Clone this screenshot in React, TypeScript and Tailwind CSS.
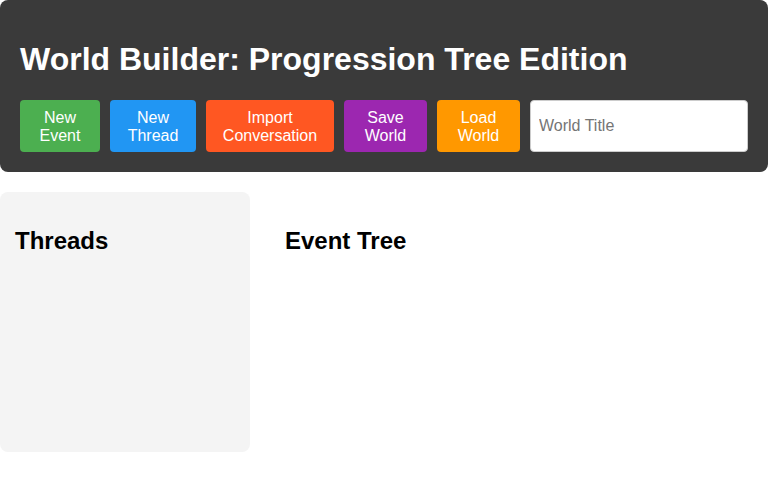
import React from 'react';

const buttons = [
  { label: 'New Event', cls: 'bg-[#4CAF50] w-[80px]' },
  { label: 'New Thread', cls: 'bg-[#2196F3] w-[86px]' },
  { label: 'Import Conversation', cls: 'bg-[#FF5722] w-[128px]' },
  { label: 'Save World', cls: 'bg-[#9C27B0] w-[83px]' },
  { label: 'Load World', cls: 'bg-[#FF9800] w-[83px]' },
];

export default function App() {
  return (
    <div className="min-h-[480px] bg-white font-['Liberation_Sans',Arial,sans-serif]">
      <header className="bg-[#3a3a3a] rounded-lg p-5 text-white">
        <h1 className="text-[32px] font-bold leading-[37px] my-[0.67em]">World Builder: Progression Tree Edition</h1>
        <div className="flex gap-[10px]">
          {buttons.map((b) => (
            <button
              key={b.label}
              className={`${b.cls} shrink-0 rounded px-4 pt-[9px] pb-[7px] text-center text-base leading-[18px] text-white`}
            >
              {b.label}
            </button>
          ))}
          <input
            type="text"
            placeholder="World Title"
            className="flex-1 min-w-0 rounded border border-[#ccc] bg-white px-2 text-base text-black placeholder:text-[#757575] outline-none"
          />
        </div>
      </header>
      <div className="mt-5 flex gap-5">
        <aside className="w-[250px] h-[260px] shrink-0 rounded-lg bg-[#f4f4f4] p-[15px]">
          <h2 className="text-2xl font-bold leading-[28px] my-[0.83em] text-black">Threads</h2>
        </aside>
        <main className="flex-1 p-[15px]">
          <h2 className="text-2xl font-bold leading-[28px] my-[0.83em] text-black">Event Tree</h2>
        </main>
      </div>
    </div>
  );
}
